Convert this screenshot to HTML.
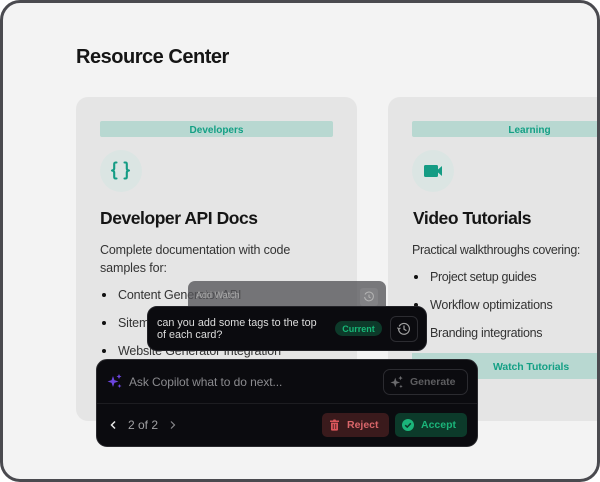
<!DOCTYPE html>
<html><head><meta charset="utf-8">
<style>
html,body{margin:0;padding:0;background:#fff}
body{width:600px;height:482px;position:relative;overflow:hidden;font-family:"Liberation Sans",sans-serif}
.a{position:absolute;white-space:nowrap}
#frame{position:absolute;left:0;top:0;width:600px;height:482px;box-sizing:border-box;border:3px solid #4a4a4f;border-radius:20px;background:#f3f3f3;overflow:hidden}
#inner{position:absolute;left:-3px;top:-3px;width:600px;height:482px}
.card{position:absolute;background:#e5e5e5;border-radius:12px}
.tag{position:absolute;background:#b8d8d1;border-radius:2px;color:#14a085;font-size:10px;font-weight:bold;text-align:center;height:16px;line-height:19px}
.circ{position:absolute;width:42px;height:42px;border-radius:50%;background:#dbe5e3}
.t{font-size:12.5px;color:#333;line-height:16px}
.h{font-size:17.5px;font-weight:bold;color:#151515;line-height:22px;letter-spacing:-.45px}
.dot{position:absolute;width:4px;height:4px;border-radius:50%;background:#111}
.dark{position:absolute;background:#0b0b0f;box-sizing:border-box}
</style></head>
<body>
<div id="frame"><div id="inner">
<div class="a" style="left:76px;top:45px;font-size:20px;font-weight:bold;color:#151515;line-height:24px;letter-spacing:-.48px">Resource Center</div>

<div class="card" style="left:76px;top:97px;width:281px;height:324px"></div>
<div class="card" style="left:388px;top:97px;width:240px;height:324px"></div>

<div class="tag" style="left:100px;top:121px;width:233px">Developers</div>
<div class="tag" style="left:412px;top:121px;width:233px;text-indent:2px">Learning</div>

<div class="circ" style="left:100px;top:150px"></div>
<div class="circ" style="left:412px;top:150px"></div>
<svg class="a" style="left:110px;top:160px" width="22" height="22" viewBox="0 0 22 22" fill="none" stroke="#149c84" stroke-width="2.1" stroke-linecap="round" stroke-linejoin="round"><path d="M6.5 2.5H5.6C4.6 2.5 4.2 3.1 4.2 4V8.5C4.2 9.6 3.4 10.3 2 10.5 3.4 10.7 4.2 11.4 4.2 12.5V17C4.2 17.9 4.6 18.5 5.6 18.5H6.5"/><path d="M14.5 2.5H15.4C16.4 2.5 16.8 3.1 16.8 4V8.5C16.8 9.6 17.6 10.3 19 10.5 17.6 10.7 16.8 11.4 16.8 12.5V17C16.8 17.9 16.4 18.5 15.4 18.5H14.5"/></svg>
<svg class="a" style="left:423px;top:163px" width="20" height="16" viewBox="0 0 20 16"><rect x="1" y="2" width="14" height="12" rx="1.5" fill="#149c84"/><path d="M15 6.5 19 3V13L15 9.5Z" fill="#149c84"/></svg>

<div class="a h" style="left:100px;top:207px">Developer API Docs</div>
<div class="a h" style="left:413px;top:207px">Video Tutorials</div>

<div class="a t" style="left:100px;top:242px;letter-spacing:-.16px">Complete documentation with code</div>
<div class="a t" style="left:100px;top:260px;letter-spacing:-.1px">samples for:</div>
<div class="dot" style="left:102px;top:293px"></div>
<div class="a t" style="left:118px;top:287px;letter-spacing:-.15px">Content Generator API</div>
<div class="dot" style="left:102px;top:321px"></div>
<div class="a t" style="left:118px;top:315px;letter-spacing:-.15px">Sitemap Generator</div>
<div class="dot" style="left:102px;top:349px"></div>
<div class="a t" style="left:118px;top:343px;letter-spacing:-.15px">Website Generator Integration</div>

<div class="a t" style="left:412px;top:242px;letter-spacing:-.35px">Practical walkthroughs covering:</div>
<div class="dot" style="left:414px;top:275px"></div>
<div class="a t" style="left:430px;top:269px;letter-spacing:-.35px">Project setup guides</div>
<div class="dot" style="left:414px;top:303px"></div>
<div class="a t" style="left:430px;top:297px;letter-spacing:-.23px">Workflow optimizations</div>
<div class="a t" style="left:430px;top:325px;letter-spacing:-.28px">Branding integrations</div>
<div class="tag" style="left:412px;top:353px;width:233px;height:26px;line-height:28px;font-size:10.5px;border-radius:0;text-align:left;text-indent:81px;letter-spacing:-.1px">Watch Tutorials</div>

<!-- grey history card -->
<div class="a" style="left:188px;top:281px;width:198px;height:50px;background:rgba(85,85,88,.78);border-radius:7px"></div>
<div class="a" style="left:196px;top:290px;font-size:9px;color:#aaa">Add Watch</div>
<div class="a" style="left:360px;top:288px;width:18px;height:18px;border-radius:3px;background:#828285"></div>
<svg class="a" style="left:363px;top:291px" width="12" height="12" viewBox="0 0 12 12" fill="none" stroke="#b5b5b5" stroke-width="1"><path d="M2 3.5A4.4 4.4 0 1 1 1.6 6"/><path d="M6 3.6V6L7.6 7"/></svg>

<!-- message -->
<div class="dark" style="left:147px;top:306px;width:280px;height:45px;border-radius:10px;border:1px solid #222227"></div>
<div class="a" style="left:157px;top:318px;font-size:10.8px;line-height:11.5px;color:#dcdcdc">can you add some tags to the top<br>of each card?</div>
<div class="a" style="left:335px;top:321px;width:47px;height:15px;border-radius:8px;background:#0d3a2a;color:#17b877;font-size:9px;font-weight:bold;line-height:16px;text-align:center">Current</div>
<div class="a" style="left:390px;top:316px;width:28px;height:26px;box-sizing:border-box;border:1px solid #2c2c31;border-radius:6px"></div>
<svg class="a" style="left:397px;top:322px" width="14" height="14" viewBox="0 0 14 14" fill="none" stroke="#a0a0a0" stroke-width="1.2" stroke-linecap="round"><path d="M2.4 4A5.4 5.4 0 1 1 1.6 7"/><path d="M.8 6 1.8 7.3 3 6.2"/><path d="M7 4V7.2L9 8.4"/></svg>

<!-- prompt -->
<div class="dark" style="left:96px;top:359px;width:382px;height:88px;border-radius:11px;border:1px solid #2a2a2e"></div>
<div class="a" style="left:97px;top:403px;width:380px;height:1px;background:#1d1d21"></div>
<svg class="a" style="left:107px;top:373px" width="16" height="16" viewBox="0 0 16 16" fill="#6d45e0"><path d="M6 3 7.4 7.1 11.5 8.5 7.4 9.9 6 14 4.6 9.9.5 8.5 4.6 7.1Z"/><path d="M12 1 12.8 2.7 14.5 3.5 12.8 4.3 12 6 11.2 4.3 9.5 3.5 11.2 2.7Z"/><path d="M12.5 11 13.1 12.4 14.5 13 13.1 13.6 12.5 15 11.9 13.6 10.5 13 11.9 12.4Z"/></svg>
<div class="a" style="left:129px;top:374px;font-size:12px;line-height:16px;color:#8b8b8f;letter-spacing:-.07px">Ask Copilot what to do next...</div>
<div class="a" style="left:383px;top:369px;width:85px;height:26px;box-sizing:border-box;border:1px solid #2b2b30;border-radius:7px"></div>
<svg class="a" style="left:390px;top:375px" width="14" height="14" viewBox="0 0 16 16" fill="#6b6b6e"><path d="M6 3 7.4 7.1 11.5 8.5 7.4 9.9 6 14 4.6 9.9.5 8.5 4.6 7.1Z"/><path d="M12 1 12.8 2.7 14.5 3.5 12.8 4.3 12 6 11.2 4.3 9.5 3.5 11.2 2.7Z"/><path d="M12.5 11 13.1 12.4 14.5 13 13.1 13.6 12.5 15 11.9 13.6 10.5 13 11.9 12.4Z"/></svg>
<div class="a" style="left:410px;top:375px;font-size:10.5px;font-weight:bold;line-height:14px;color:#5d5d60">Generate</div>

<svg class="a" style="left:109px;top:420px" width="8" height="10" viewBox="0 0 8 10" fill="none" stroke="#e6e6e6" stroke-width="1.5"><path d="M6 1.5 2.5 5 6 8.5"/></svg>
<div class="a" style="left:128px;top:418px;font-size:12px;line-height:14px;color:#a0a0a3">2 of 2</div>
<svg class="a" style="left:169px;top:420px" width="8" height="10" viewBox="0 0 8 10" fill="none" stroke="#8a8a8d" stroke-width="1.2"><path d="M2 1.5 5.5 5 2 8.5"/></svg>

<div class="a" style="left:322px;top:413px;width:67px;height:24px;border-radius:5px;background:#3a1a1c"></div>
<svg class="a" style="left:329px;top:419px" width="11" height="12" viewBox="0 0 11 12" fill="#d9565a"><path d="M1 1.5H4L4.5.5H6.5L7 1.5H10V3H1Z"/><path d="M2 3.6H9V10.5C9 11.2 8.6 11.6 8 11.6H3C2.4 11.6 2 11.2 2 10.5ZM3.8 5V10H4.6V5ZM6.4 5V10H7.2V5Z" fill-rule="evenodd"/></svg>
<div class="a" style="left:347px;top:418px;font-size:10.5px;font-weight:bold;line-height:14px;color:#d9666a">Reject</div>

<div class="a" style="left:395px;top:413px;width:72px;height:24px;border-radius:5px;background:#0c3a2a"></div>
<svg class="a" style="left:402px;top:419px" width="12" height="12" viewBox="0 0 12 12"><circle cx="6" cy="6" r="6" fill="#1bb57a"/><path d="M3.2 6.2 5.2 8.1 8.8 4.3" fill="none" stroke="#0c3a2a" stroke-width="1.5"/></svg>
<div class="a" style="left:421px;top:418px;font-size:10.5px;font-weight:bold;line-height:14px;color:#1bb57a">Accept</div>
</div></div>
</body></html>
